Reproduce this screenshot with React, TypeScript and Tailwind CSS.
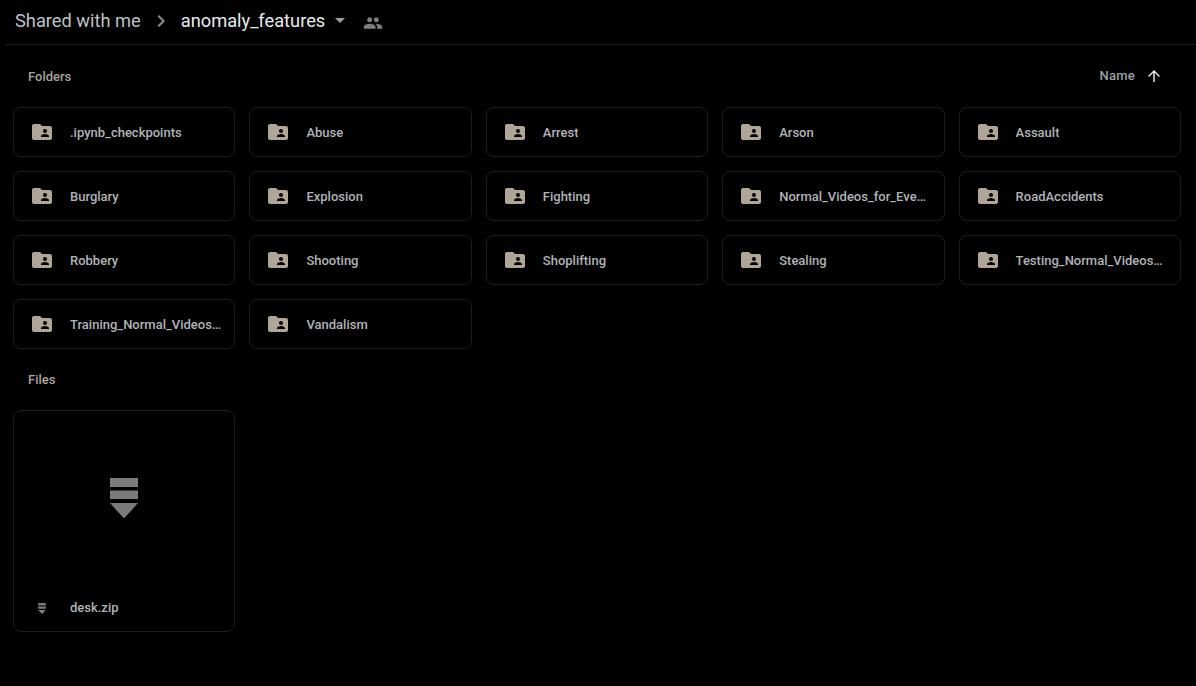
const folders = [
  ".ipynb_checkpoints",
  "Abuse",
  "Arrest",
  "Arson",
  "Assault",
  "Burglary",
  "Explosion",
  "Fighting",
  "Normal_Videos_for_Event_Recognition",
  "RoadAccidents",
  "Robbery",
  "Shooting",
  "Shoplifting",
  "Stealing",
  "Testing_Normal_Videos_Anomaly",
  "Training_Normal_Videos_Anomaly",
  "Vandalism",
];

const FolderIcon = () => (
  <svg width="24" height="24" viewBox="0 0 24 24" fill="#b1a597" className="shrink-0">
    <path d="M20 6h-8l-2-2H4c-1.1 0-2 .9-2 2v12c0 1.1.9 2 2 2h16c1.1 0 2-.9 2-2V8c0-1.1-.9-2-2-2zm-5 3c1.1 0 2 .9 2 2s-.9 2-2 2-2-.9-2-2 .9-2 2-2zm4 8h-8v-1c0-1.33 2.67-2 4-2s4 .67 4 2v1z" />
  </svg>
);

const ZipIcon = ({ className }: { className: string }) => (
  <svg viewBox="0 0 28 40" fill="#7b7b7b" className={className}>
    <rect x="0" y="0" width="28" height="9" />
    <rect x="0" y="12.5" width="28" height="8.5" />
    <path d="M0 25h28L14 40.5z" />
  </svg>
);

export default function App() {
  return (
    <div className="w-[1196px] h-[686px] overflow-hidden bg-black font-['Roboto',sans-serif]">
      <div className="ml-[5px] h-[45px] border-b border-[#1b1d1f] flex items-center pl-[10px]">
        <span className="text-[18.25px] text-[#bdc1c6] mb-[3px]">Shared with me</span>
        <svg width="24" height="24" viewBox="0 0 24 24" fill="#8b8f94" className="ml-[8px] mb-[3px]">
          <path d="M8.59 16.59 13.17 12 8.59 7.41 10 6l6 6-6 6z" />
        </svg>
        <span className="ml-[8px] text-[18.25px] text-[#e8eaed] mb-[3px]">anomaly_features</span>
        <svg width="24" height="24" viewBox="0 0 24 24" fill="#9aa0a6" className="ml-[3px] mb-[4px]">
          <path d="M7 10l5 5 5-5z" />
        </svg>
        <svg width="20" height="20" viewBox="0 0 24 24" fill="#7b7e82" className="ml-[11px] mt-[1px]">
          <path d="M16 11c1.66 0 2.99-1.34 2.99-3S17.66 5 16 5s-3 1.34-3 3 1.34 3 3 3zm-8 0c1.66 0 2.99-1.34 2.99-3S9.66 5 8 5 5 6.34 5 8s1.34 3 3 3zm0 2c-2.33 0-7 1.17-7 3.5V19h14v-2.5C15 14.17 10.33 13 8 13zm8 0c-.29 0-.62.02-.97.05 1.16.84 1.97 1.97 1.97 3.45V19h6v-2.5c0-2.33-4.67-3.5-7-3.5z" />
        </svg>
      </div>

      <div className="h-[62px] flex items-center justify-between pl-[28px] pr-[33px]">
        <span className="text-[13px] font-medium text-[#a8a39c] pt-[2px]">Folders</span>
        <div className="flex items-center">
          <span className="text-[13px] font-medium text-[#9aa0a6] tracking-[0.02em]">Name</span>
          <svg width="18" height="18" viewBox="0 0 24 24" fill="#e8eaed" className="ml-[10px]">
            <path d="M4 12l1.41 1.41L11 7.83V20h2V7.83l5.58 5.59L20 12l-8-8-8 8z" />
          </svg>
        </div>
      </div>

      <div className="grid grid-cols-5 gap-x-[14px] gap-y-[14px] pl-[13px] pr-[15px]">
        {folders.map((name) => (
          <div
            key={name}
            className="h-[50px] min-w-0 flex items-center pl-[16px] pr-[13px] rounded-lg border border-[#1b1d1f]"
          >
            <FolderIcon />
            <span className="ml-[16px] pt-[2px] truncate text-[13px] font-medium text-[#b0b3b8]">{name}</span>
          </div>
        ))}
      </div>

      <div className="h-[61px] flex items-center pl-[28px]">
        <span className="text-[13px] font-medium text-[#a8a39c]">Files</span>
      </div>

      <div className="grid grid-cols-5 gap-x-[14px] pl-[13px] pr-[15px]">
        <div className="h-[222px] flex flex-col rounded-lg border border-[#1b1d1f]">
          <div className="flex-1 flex items-center justify-center pt-[2px]">
            <ZipIcon className="w-[28px] h-[40px]" />
          </div>
          <div className="h-[48px] flex items-center pl-[24px] pt-[2px]">
            <ZipIcon className="w-[8px] h-[11px]" />
            <span className="ml-[24px] text-[13px] font-medium text-[#b0b3b8]">desk.zip</span>
          </div>
        </div>
      </div>
    </div>
  );
}
